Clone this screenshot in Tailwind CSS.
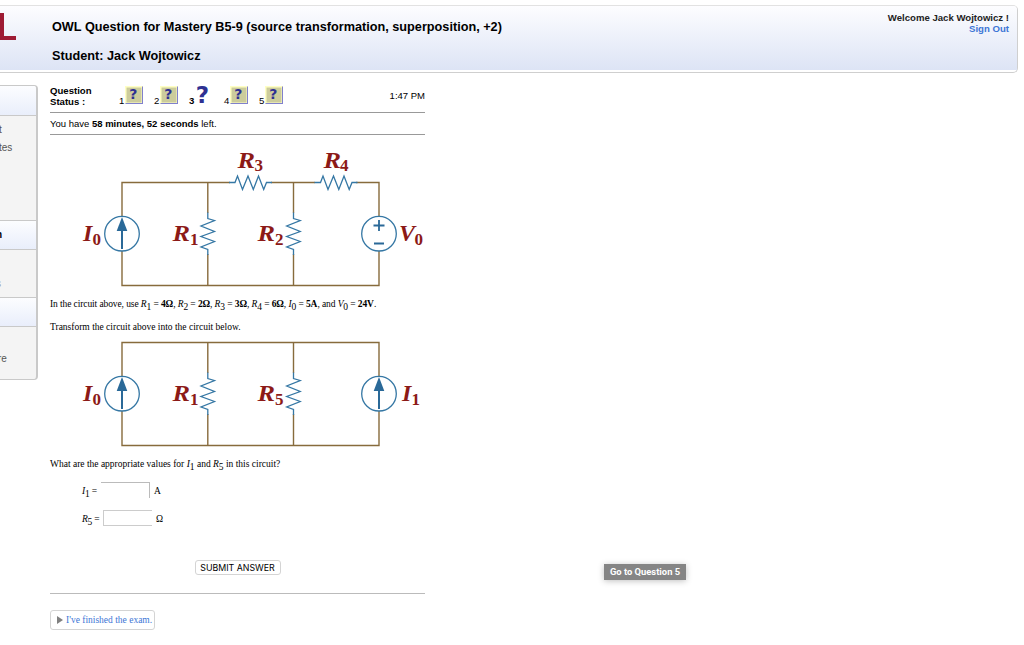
<!DOCTYPE html>
<html lang="en">
<head>
  <meta charset="utf-8">
  <title>OWL Question</title>
  <script src="https://cdn.jsdelivr.net/npm/@tailwindcss/browser@4"></script>
</head>
<body class="bg-white text-black overflow-hidden font-['Liberation_Sans',sans-serif]">

  <!-- Header -->
  <header class="mt-[5px] w-[1018px] h-[68px] border border-l-0 border-t-[#e2e2e2] border-[#cfcfcf] rounded-r-[5px] pb-[2px]">
    <div class="h-full flex bg-linear-to-b from-[#fdfdff] to-[#dde4f5] rounded-tr-[4px]">
      <svg class="w-[52px] h-[40px] shrink-0" viewBox="0 0 52 40">
        <path d="M0 7H4V30H16V34H0Z" fill="#9e1b34"/>
      </svg>
      <div class="flex-1 pt-[12px] text-[12.7px] leading-[18px] font-bold whitespace-nowrap">
        <h1>OWL Question for Mastery B5-9 (source transformation, superposition, +2)</h1>
        <h2 class="mt-[11px]">Student: Jack Wojtowicz</h2>
      </div>
      <div class="pt-[6px] pr-2 text-right text-[9.6px] leading-[11px] font-bold text-[#222]">
        <p>Welcome Jack Wojtowicz !</p>
        <a class="text-[#3d76d6]">Sign Out</a>
      </div>
    </div>
  </header>

  <div class="flex">
    <!-- Sidebar -->
    <aside class="mt-3 w-[38px] h-[295px] shrink-0 overflow-hidden bg-[#f4f4f4] border border-r-2 border-l-0 border-[#c9c9c9] rounded-r-[4px] text-[10px] leading-[18px] text-[#555]">
      <div class="h-[30px] border-b border-[#c9c9c9] bg-linear-to-b from-[#fcfdff] to-[#e9eefb]"></div>
      <div class="h-[104px] pt-[5px]">
        <p class="-ml-px">t</p>
        <p class="-ml-px">tes</p>
      </div>
      <div class="h-[30px] border-y border-[#c9c9c9] bg-linear-to-b from-[#fcfdff] to-[#e9eefb] font-bold text-black leading-[28px]"><p class="-ml-[4px]">n</p></div>
      <div class="h-[47px] pt-[25px]"><p class="-ml-[4px] text-[#999]">s</p></div>
      <div class="h-[30px] border-y border-[#c9c9c9] bg-linear-to-b from-[#fcfdff] to-[#e9eefb]"></div>
      <div class="pt-[23px]"><p class="-ml-[2px]">re</p></div>
    </aside>

    <main class="ml-3 w-[375px] shrink-0 font-['Liberation_Serif',serif] text-[9.5px]">
      <!-- Question status -->
      <div class="h-[40px] border-b border-[#999] flex items-start font-['Liberation_Sans',sans-serif] text-[9.6px]">
        <div class="w-[69px] pt-3 leading-[11px] font-bold">Question<br>Status :</div>
        <div class="flex pt-3">
          <div class="w-[35px] h-[21px] flex items-end"><span class="w-[6px] leading-[11px]">1</span>
            <svg class="w-[18px] h-[18px] mb-[2px]" viewBox="0 0 18 18"><path d="M0 0H18V18H0Z" fill="#8080cc"/><path d="M0 0H18L17 1V17H1L0 18Z" fill="#ffffc4"/><path d="M1.500 1.500H16.500V16.500H1.500Z" fill="#cccc9c"/><text x="4.200" y="13" font-family="DejaVu Sans" font-size="14" font-weight="bold" fill="#2e3192">?</text></svg>
          </div>
          <div class="w-[35px] h-[21px] flex items-end"><span class="w-[6px] leading-[11px]">2</span>
            <svg class="w-[18px] h-[18px] mb-[2px]" viewBox="0 0 18 18"><path d="M0 0H18V18H0Z" fill="#8080cc"/><path d="M0 0H18L17 1V17H1L0 18Z" fill="#ffffc4"/><path d="M1.500 1.500H16.500V16.500H1.500Z" fill="#cccc9c"/><text x="4.200" y="13" font-family="DejaVu Sans" font-size="14" font-weight="bold" fill="#2e3192">?</text></svg>
          </div>
          <div class="w-[35px] h-[21px] flex items-end"><span class="w-[6px] leading-[11px] font-bold">3</span>
            <svg class="w-[18px] h-[18px] mb-[2px]" viewBox="0 0 18 18"><text x="0.800" y="17" font-family="DejaVu Sans" font-size="23" font-weight="bold" fill="#2e3192">?</text></svg>
          </div>
          <div class="w-[35px] h-[21px] flex items-end"><span class="w-[6px] leading-[11px]">4</span>
            <svg class="w-[18px] h-[18px] mb-[2px]" viewBox="0 0 18 18"><path d="M0 0H18V18H0Z" fill="#8080cc"/><path d="M0 0H18L17 1V17H1L0 18Z" fill="#ffffc4"/><path d="M1.500 1.500H16.500V16.500H1.500Z" fill="#cccc9c"/><text x="4.200" y="13" font-family="DejaVu Sans" font-size="14" font-weight="bold" fill="#2e3192">?</text></svg>
          </div>
          <div class="w-[35px] h-[21px] flex items-end"><span class="w-[6px] leading-[11px]">5</span>
            <svg class="w-[18px] h-[18px] mb-[2px]" viewBox="0 0 18 18"><path d="M0 0H18V18H0Z" fill="#8080cc"/><path d="M0 0H18L17 1V17H1L0 18Z" fill="#ffffc4"/><path d="M1.500 1.500H16.500V16.500H1.500Z" fill="#cccc9c"/><text x="4.200" y="13" font-family="DejaVu Sans" font-size="14" font-weight="bold" fill="#2e3192">?</text></svg>
          </div>
        </div>
        <span class="ml-auto pt-[17px] text-[9.5px] leading-[12px] whitespace-nowrap">1:47 PM</span>
      </div>
      <p class="h-[22px] border-b border-[#999] font-['Liberation_Sans',sans-serif] text-[9.5px] leading-[21px]">You have <b>58 minutes, 52 seconds</b> left.</p>

      <!-- Original circuit -->
      <svg class="block w-[385px] h-[161px]" viewBox="50 135 385 161" fill="none">
        <g stroke="#876b3c" stroke-width="1.4">
          <path d="M122 216V182.500H230M271 182.500H315M356 182.500H379V216M379 251V285.500H122V251"/>
          <path d="M207.800 182.500V213M207.800 254V285.500M293.500 182.500V213M293.500 254V285.500"/>
        </g>
        <g stroke="#3577a4" stroke-width="1.300">
          <path d="M229 182.500H235L237.500 176L242.500 189.500L248 176L253.300 189.500L258.500 176L263.700 189.500L266.500 182.500H272"/>
          <path d="M314.500 182.500H320.500L323 176L328 189.500L333.500 176L338.800 189.500L344 176L349.200 189.500L352 182.500H357.500"/>
          <path d="M207.800 212.500V218.500L214.500 220.500L201 226L214.500 231.500L201 236.500L214.500 241.500L201 247L207.800 249.500V255"/>
          <path d="M293.500 212.500V218.500L300.200 220.500L286.700 226L300.200 231.500L286.700 236.500L300.200 241.500L286.700 247L293.500 249.500V255"/>
          <circle cx="122" cy="233.700" r="17.300"/>
          <circle cx="379" cy="233.700" r="17.300"/>
        </g>
        <path d="M122 249V228" stroke="#2a6998" stroke-width="2"/>
        <path d="M122 217L127.300 231H116.700Z" fill="#2a6998"/>
        <path d="M373.500 225.500H384.500M379 220V231M374 243.500H384" stroke="#2a6998" stroke-width="1.800"/>
        <g fill="#8c1a17" font-family="Liberation Serif" font-weight="bold" font-size="24" font-style="italic">
          <text x="83" y="241">I</text>
          <text x="172.500" y="241" textLength="17.500" lengthAdjust="spacingAndGlyphs">R</text>
          <text x="257.500" y="241" textLength="17.500" lengthAdjust="spacingAndGlyphs">R</text>
          <text x="237.500" y="167.500" textLength="17.500" lengthAdjust="spacingAndGlyphs">R</text>
          <text x="323.500" y="167.500" textLength="17.500" lengthAdjust="spacingAndGlyphs">R</text>
          <text x="399" y="241">V</text>
        </g>
        <g fill="#8c1a17" font-family="Liberation Serif" font-weight="bold" font-size="17">
          <text x="92.500" y="245">0</text>
          <text x="190" y="245">1</text>
          <text x="275" y="245">2</text>
          <text x="254.500" y="171">3</text>
          <text x="340" y="171">4</text>
          <text x="414.500" y="245">0</text>
        </g>
      </svg>

      <p class="h-[23px] leading-[16px] whitespace-nowrap tracking-[-0.1px]">In the circuit above, use <i>R</i><span class="relative top-[3px]">1</span> = <b>4Ω</b>, <i>R</i><span class="relative top-[3px]">2</span> = <b>2Ω</b>, <i>R</i><span class="relative top-[3px]">3</span> = <b>3Ω</b>, <i>R</i><span class="relative top-[3px]">4</span> = <b>6Ω</b>, <i>I</i><span class="relative top-[3px]">0</span> = <b>5A</b>, and <i>V</i><span class="relative top-[3px]">0</span> = <b>24V</b>.</p>
      <p class="h-[17px] leading-[16px] whitespace-nowrap">Transform the circuit above into the circuit below.</p>

      <!-- Transformed circuit -->
      <svg class="block w-[385px] h-[120px]" viewBox="50 336 385 120" fill="none">
        <g stroke="#876b3c" stroke-width="1.4">
          <path d="M122 376V342.500H379V376M379 411V445.500H122V411"/>
          <path d="M207.800 342.500V373M207.800 414V445.500M293.500 342.500V373M293.500 414V445.500"/>
        </g>
        <g stroke="#3577a4" stroke-width="1.300">
          <path d="M207.800 372.500V378.500L214.500 380.500L201 386L214.500 391.500L201 396.500L214.500 401.500L201 407L207.800 409.500V415"/>
          <path d="M293.500 372.500V378.500L300.200 380.500L286.700 386L300.200 391.500L286.700 396.500L300.200 401.500L286.700 407L293.500 409.500V415"/>
          <circle cx="122" cy="393.700" r="17.300"/>
          <circle cx="379" cy="393.700" r="17.300"/>
        </g>
        <path d="M122 409V388M379 409V388" stroke="#2a6998" stroke-width="2"/>
        <path d="M122 377L127.300 391H116.700ZM379 377L384.300 391H373.700Z" fill="#2a6998"/>
        <g fill="#8c1a17" font-family="Liberation Serif" font-weight="bold" font-size="24" font-style="italic">
          <text x="83" y="401">I</text>
          <text x="172.500" y="401" textLength="17.500" lengthAdjust="spacingAndGlyphs">R</text>
          <text x="257.500" y="401" textLength="17.500" lengthAdjust="spacingAndGlyphs">R</text>
          <text x="402" y="401">I</text>
        </g>
        <g fill="#8c1a17" font-family="Liberation Serif" font-weight="bold" font-size="17">
          <text x="92.500" y="405">0</text>
          <text x="190" y="405">1</text>
          <text x="275" y="405">5</text>
          <text x="411.500" y="405">1</text>
        </g>
      </svg>

      <p class="h-[26px] leading-[16px] whitespace-nowrap">What are the appropriate values for <i>I</i><span class="relative top-[3px]">1</span> and <i>R</i><span class="relative top-[3px]">5</span> in this circuit?</p>

      <!-- Answer fields -->
      <div class="ml-8 h-[28px] flex items-start leading-[18px]">
        <label class="w-[19px] whitespace-nowrap tracking-[-0.2px]"><i>I</i><span class="relative top-[3px]">1</span> =</label>
        <input type="text" class="w-[49px] h-[16px] border-t border-r border-[#bbb]">
        <span class="ml-[4px]">A</span>
      </div>
      <div class="ml-8 h-[50px] flex items-start leading-[18px]">
        <label class="w-[21px] whitespace-nowrap tracking-[-0.2px]"><i>R</i><span class="relative top-[3px]">5</span> =</label>
        <input type="text" class="w-[49px] h-[16px] border border-r-0 border-[#ccc]">
        <span class="ml-[4px]">Ω</span>
      </div>
      <div class="h-[34px] border-b border-[#bbb] flex justify-center items-start">
        <button class="w-[86px] h-[15px] border border-[#d4d4d4] rounded-[3px] font-[Inter,sans-serif] text-[8.8px] leading-[14px] whitespace-nowrap">SUBMIT ANSWER</button>
      </div>
      <button class="mt-4 w-[105px] h-[20px] border border-[#d4d4d4] rounded-[3px] flex items-center pl-[6px] gap-[3px] text-[9.5px] text-[#3d76d6] whitespace-nowrap">
        <svg class="w-[6px] h-[8px] shrink-0" viewBox="0 0 6 8"><path d="M0 0L6 4L0 8Z" fill="#808080"/></svg>
        I've finished the exam.
      </button>
    </main>

    <button class="mt-[491px] ml-[179px] w-[82px] h-[16px] shrink-0 bg-[#858585] text-white shadow-[0_1px_6px_rgba(0,0,0,0.25)] font-[Roboto,sans-serif] font-bold text-[9.4px] leading-[16px] whitespace-nowrap">Go to Question 5</button>
  </div>
</body>
</html>
